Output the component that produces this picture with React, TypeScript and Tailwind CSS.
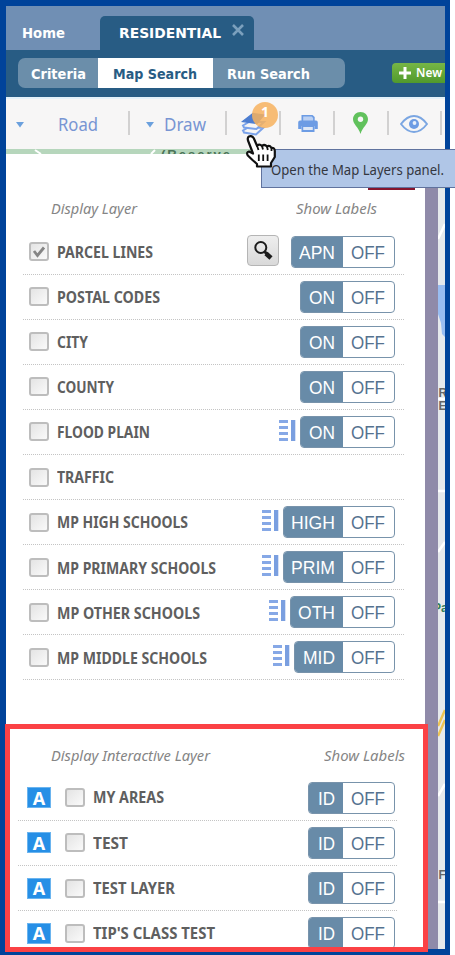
import { useLayoutEffect, useRef, useState } from "react";
import type { ReactNode } from "react";

const PT = "font-['Noto_Sans','Open_Sans',sans-serif]";

// Condenses or widens a line of text so that it fills the given width.
function Fit({ w, className = "", children }: { w: number; className?: string; children: ReactNode }) {
  const ref = useRef<HTMLSpanElement>(null);
  const [scale, setScale] = useState(1);
  useLayoutEffect(() => {
    const el = ref.current;
    if (el) setScale(w / parseFloat(getComputedStyle(el).width));
  }, [w]);
  return (
    <span className={`block shrink-0 whitespace-nowrap ${className}`} style={{ width: w }}>
      <span ref={ref} className="inline-block origin-left" style={{ transform: `scaleX(${scale})` }}>
        {children}
      </span>
    </span>
  );
}

function Checkbox({ checked = false }: { checked?: boolean }) {
  return (
    <span className="flex h-[19px] w-[20px] shrink-0 items-center justify-center rounded-[3px] border-2 border-[#bdbdbd] bg-linear-to-br from-[#e4e4e4] to-[#fafafa]">
      {checked && (
        <svg viewBox="0 0 14 14" className="size-[14px]" fill="none" stroke="#858585" strokeWidth="2.8">
          <path d="M2 6 L5.5 10.5 L12 2.5" />
        </svg>
      )}
    </span>
  );
}

function Toggle({ on, w, textW }: { on: string; w: number; textW: number }) {
  return (
    <span
      className="flex h-[32px] shrink-0 overflow-hidden rounded-[4px] border border-[#7893ab] bg-white font-['Liberation_Sans',sans-serif] text-[18.5px] leading-[31px]"
      style={{ width: w }}
    >
      <span className="flex flex-1 justify-end bg-[#688ba8] pr-[8px] text-white">
        <Fit w={textW}>{on}</Fit>
      </span>
      <span className="w-[51px] pl-[8px] text-[#55728f]">
        <Fit w={34}>OFF</Fit>
      </span>
    </span>
  );
}

function LegendIcon() {
  return (
    <svg viewBox="0 0 17 21" className="mr-[4px] mb-[3px] h-[21px] w-[17px] shrink-0" fill="#86a8e6">
      <path d="M0 0h9v3H0zM0 6h9v3H0zM0 12h9v3H0zM0 18h9v3H0z" />
      <path d="M12 0h4.3v21H12z" fill="#7a9fe0" />
    </svg>
  );
}

type Layer = { name: string; w: number; on?: string; tw?: number; onW?: number; legend?: boolean; search?: boolean; checked?: boolean };

const layers: Layer[] = [
  { name: "PARCEL LINES", w: 96, on: "APN", tw: 104, onW: 36, search: true, checked: true },
  { name: "POSTAL CODES", w: 103, on: "ON", tw: 95, onW: 26 },
  { name: "CITY", w: 31, on: "ON", tw: 95, onW: 26 },
  { name: "COUNTY", w: 57, on: "ON", tw: 95, onW: 26 },
  { name: "FLOOD PLAIN", w: 93, on: "ON", tw: 95, onW: 26, legend: true },
  { name: "TRAFFIC", w: 57 },
  { name: "MP HIGH SCHOOLS", w: 131, on: "HIGH", tw: 112, onW: 44, legend: true },
  { name: "MP PRIMARY SCHOOLS", w: 159, on: "PRIM", tw: 112, onW: 44, legend: true },
  { name: "MP OTHER SCHOOLS", w: 143, on: "OTH", tw: 105, onW: 37, legend: true },
  { name: "MP MIDDLE SCHOOLS", w: 150, on: "MID", tw: 101, onW: 32, legend: true },
];

const areas = [
  { name: "MY AREAS", w: 71 },
  { name: "TEST", w: 35 },
  { name: "TEST LAYER", w: 82 },
  { name: "TIP'S CLASS TEST", w: 122 },
];

function LayerRow({ l }: { l: Layer }) {
  return (
    <div className="ml-[17px] flex h-[45.1px] w-[381px] items-center border-b border-dotted border-[#c4c4c4] pr-[9px] pl-[6px]">
      <Checkbox checked={l.checked} />
      <Fit w={l.w} className={`mt-[2px] ml-[8px] ${PT} text-[15.5px] font-bold text-[#5f5f5f]`}>
        {l.name}
      </Fit>
      <span className="flex-1" />
      {l.search && (
        <span className="mr-[12px] mb-[3px] flex h-[31px] w-[32px] items-center justify-center rounded-[4px] border border-[#b5b5b5] bg-linear-to-b from-[#eeeeee] to-[#d9d9d9]">
          <svg viewBox="0 0 20 21" className="h-[21px] w-[20px]" fill="none" stroke="#1c1c1c">
            <circle cx="7.8" cy="7.5" r="5.5" strokeWidth="2" />
            <path d="M11.5 11.5 L14 14" strokeWidth="3" />
            <path d="M13 13.5 L18 18" strokeWidth="4.6" />
          </svg>
        </span>
      )}
      {l.legend && <LegendIcon />}
      {l.on && <Toggle on={l.on} w={l.tw ?? 95} textW={l.onW ?? 26} />}
    </div>
  );
}

function Divider() {
  return <span className="h-[24px] w-[2px] shrink-0 bg-[#d2d1d1]" />;
}

function Caret() {
  return (
    <svg viewBox="0 0 8 6" className="mt-[3px] h-[6px] w-[8px] shrink-0">
      <path d="M0 0h8L4 5.5z" fill="#6ba0dd" />
    </svg>
  );
}

function LayersIcon() {
  return (
    <svg viewBox="0 0 26 24" className="h-[24px] w-[26px]" fill="none" stroke="#7ba3ea" strokeWidth="2">
      <path d="M2 18.5 L8 15 L22 16 L15 22.5 L3 20.5z" fill="#f7f6f6" />
      <path d="M2 13.5 L8 10 L23 10 L15.5 17 L3 15.5z" fill="#f7f6f6" />
      <path d="M1.5 9.5 L12 1.5 L23 3 L16 11.5z" fill="#4d7dd0" stroke="#4d7dd0" strokeWidth="1.2" />
    </svg>
  );
}

function PrintIcon() {
  return (
    <svg viewBox="0 0 20 17" className="h-[17px] w-[20px]" fill="#6d9ce4">
      <path d="M3.5 0h11l2.2 2V6H3.5z" />
      <path d="M5.2 1.6h8.4l1.5 1.4V6H5.2z" fill="#bcd1f3" />
      <path d="M2 5.5h16q1.8 0 1.8 2V14h-3.3v-3h-13v3H.2V7.500q0-2 1.800-2z" />
      <path d="M3.500 11h13v6h-13z" />
      <path d="M5.200 12h9.600v3H5.200z" fill="#dfe8f6" />
    </svg>
  );
}

function PinIcon() {
  return (
    <svg viewBox="0 0 15 22" className="h-[22px] w-[15px]">
      <path d="M7.5 0C3.2 0 0 3.2 0 7.3C0 12.5 5.5 15 7.5 22C9.5 15 15 12.5 15 7.3C15 3.2 11.8 0 7.5 0z" fill="#61c15c" />
      <circle cx="7.5" cy="7.2" r="2.7" fill="#f7f6f6" />
    </svg>
  );
}

function EyeIcon() {
  return (
    <svg viewBox="0 0 28 18" className="h-[18px] w-[28px]" fill="none" stroke="#7ba6e2">
      <path d="M1 9 Q7 1 14 1 Q21 1 27 9 Q21 17 14 17 Q7 17 1 9z" strokeWidth="1.9" />
      <circle cx="14" cy="9" r="5" fill="#6d9ce4" stroke="none" />
      <circle cx="14.5" cy="8" r="1.9" fill="#e6effb" stroke="none" />
    </svg>
  );
}

function HandCursor() {
  return (
    <svg viewBox="0 0 30 33" className="absolute top-[135px] left-[246px] z-30 h-[33px] w-[30px]">
      <path
        d="M3 1.500Q6 .2 7.800 3.200L11 10.800Q13.500 8.500 16 11Q18.500 8.800 21 11.500Q23.500 10 25.500 12.800Q28.800 12.500 28.800 16V22L25 28V31.500H11V29L6.500 25L1.800 20.500Q0 17.200 3 16.500L7 18.500L2 5.500Q1.200 2.500 3 1.500z"
        fill="#fff"
        stroke="#111"
        strokeWidth="2.2"
        strokeLinejoin="round"
      />
      <path d="M11 10.800L12.500 15M16 11L17 14.500M21 11.500L21.800 15M25.500 12.800V16M12.800 19.500V26M17.200 19.500V26M21.600 19.500V26" fill="none" stroke="#111" strokeWidth="1.800" />
    </svg>
  );
}

function MapSliver() {
  return (
    <svg viewBox="0 0 7 795" className="h-[795px] w-[7px] shrink-0 bg-[#e6e9ec]">
      <path d="M0 0h7v35H0z" fill="#dbeade" />
      <path d="M0 85L7 70M0 245H7M0 337H7M0 398L7 388M0 642L7 630M0 748H7" stroke="#fff" strokeWidth="2.5" fill="none" />
      <path d="M0 131h7v52l-3-3-1-11-3-9z" fill="#99bdf1" />
      <path d="M0 572L7 556M0 582L7 566" stroke="#edc454" strokeWidth="2.5" />
      <g fontFamily="Liberation Sans, sans-serif" fontSize="12" fontWeight="700" fill="#666">
        <text x="0.5" y="243">R</text>
        <text x="0.5" y="256">E</text>
        <text x="0.5" y="725">F</text>
      </g>
      <text x="-5" y="458" fontFamily="Liberation Sans, sans-serif" fontSize="12" fontWeight="700" fill="#328058">Pa</text>
    </svg>
  );
}

export default function App() {
  return (
    <div className="relative h-[955px] w-[455px] overflow-hidden bg-white">
      <div className="flex h-[955px] w-[450px] flex-col overflow-hidden border-t-[6px] border-r-[5px] border-b-[6px] border-l-[6px] border-[#00439a] bg-white">
        {/* Window tabs */}
        <nav className="flex h-[44px] shrink-0 items-end bg-[#708fb4] font-['DejaVu_Sans',sans-serif] text-[14px] font-bold text-white">
          <span className="flex h-[34px] w-[94px] items-center pl-[16px]">
            <Fit w={43}>Home</Fit>
          </span>
          <span className="flex h-[34px] w-[154px] rounded-t-[5px] bg-[#285c84] pl-[19px] leading-[34px]">
            <Fit w={102}>RESIDENTIAL</Fit>
            <svg viewBox="0 0 12 12" className="mt-[8px] ml-[11px] size-[12px]" stroke="#7ba0bd" strokeWidth="2.6">
              <path d="M1 1 L11 11 M11 1 L1 11" />
            </svg>
          </span>
        </nav>

        {/* Search tabs */}
        <div className="flex h-[47px] shrink-0 items-start bg-[#285c84] pt-[8px] pl-[12px] font-['DejaVu_Sans',sans-serif] text-[14px] font-bold text-white">
          <div className="flex h-[30px] w-[327px] overflow-hidden rounded-[7px] bg-[#6b8eaa] leading-[32px]">
            <span className="w-[80px] pl-[13px]">
              <Fit w={55}>Criteria</Fit>
            </span>
            <span className="w-[115px] bg-white pl-[15px] text-[#285c84]">
              <Fit w={84}>Map Search</Fit>
            </span>
            <span className="pl-[14px]">
              <Fit w={83}>Run Search</Fit>
            </span>
          </div>
          <div className="mt-[5px] ml-[47px] flex h-[20px] w-[53px] items-center overflow-hidden rounded-l-[4px] bg-linear-to-b from-[#77b646] to-[#509a2c] pl-[7px]">
            <svg viewBox="0 0 12 12" className="mr-[5px] size-[12px] shrink-0" stroke="#fff" strokeWidth="3">
              <path d="M6 0v12M0 6h12" />
            </svg>
            <Fit w={26} className={`${PT} text-[13px] font-semibold`}>
              New
            </Fit>
          </div>
        </div>

        {/* Map tools */}
        <div className={`flex h-[52px] shrink-0 items-center border-t-2 border-[#e3f1fa] bg-[#f7f6f6] pb-[2px] pl-[10px] ${PT} text-[18px] text-[#7895d3]`}>
          <Caret />
          <Fit w={40} className="mt-[2px] ml-[34px]">Road</Fit>
          <span className="w-[30px]" />
          <Divider />
          <span className="w-[16px]" />
          <Caret />
          <Fit w={42} className="mt-[2px] ml-[10px]">Draw</Fit>
          <span className="w-[19px]" />
          <Divider />
          <span className="relative mt-[2px] ml-[14px]">
            <LayersIcon />
            <span className="absolute -top-[10px] left-[11px] flex size-[26px] items-center justify-center rounded-full bg-[#f7b25e]/85 text-[14px] leading-none font-bold text-white">
              <span className="mb-[6px]">1</span>
            </span>
          </span>
          <span className="w-[12px]" />
          <Divider />
          <span className="w-[17px]" />
          <PrintIcon />
          <span className="w-[15px]" />
          <Divider />
          <span className="w-[18px]" />
          <PinIcon />
          <span className="w-[19px]" />
          <Divider />
          <span className="w-[11px]" />
          <span className="mt-[2px]">
            <EyeIcon />
          </span>
          <span className="w-[12px]" />
          <Divider />
        </div>

        {/* Visible edge of the map */}
        <div className="relative h-[5px] shrink-0 overflow-hidden bg-[#b6d6bc]">
          <svg viewBox="0 0 439 5" className="h-[5px] w-[439px]">
            <path d="M29 1L35 5M149 1L145 5" stroke="#fff" strokeWidth="2" />
            <text x="155" y="10" fontFamily="Liberation Sans, sans-serif" fontSize="13" fontWeight="700" fill="#4a7457" textLength="69">
              (Reserve
            </text>
          </svg>
        </div>

        <div className="flex h-[795px] shrink-0">
          {/* Layers panel */}
          <main className="h-[795px] w-[419px] shrink-0 overflow-hidden bg-white">
            <header className={`flex h-[75.5px] items-end justify-between pr-[48px] pb-[10.5px] pl-[45px] ${PT} text-[15px] text-[#858585] italic`}>
              <Fit w={86}>Display Layer</Fit>
              <Fit w={81}>Show Labels</Fit>
            </header>
            {layers.map((l) => (
              <LayerRow key={l.name} l={l} />
            ))}
            <header className={`flex h-[95px] items-end justify-between pr-[20px] pb-[9px] pl-[45px] ${PT} text-[15px] text-[#858585] italic`}>
              <Fit w={159}>Display Interactive Layer</Fit>
              <Fit w={81}>Show Labels</Fit>
            </header>
            {areas.map((a) => (
              <div key={a.name} className="ml-[12px] flex h-[45.3px] w-[379px] items-center border-b border-dotted border-[#c4c4c4] pr-[2px] pl-[9px]">
                <span className={`flex h-[21px] w-[24px] items-center justify-center border border-[#6ab4ef] bg-[#268fe6] ${PT} text-[18px] leading-none font-bold text-white`}>
                  A
                </span>
                <span className="w-[14px]" />
                <Checkbox />
                <Fit w={a.w} className={`mt-[1px] ml-[8px] ${PT} text-[15.5px] font-bold text-[#5f5f5f]`}>
                  {a.name}
                </Fit>
                <span className="flex-1" />
                <Toggle on="ID" w={87} textW={17} />
              </div>
            ))}
          </main>
          <span className="w-[13px] shrink-0 bg-[#8f8aa9]" />
          <MapSliver />
        </div>
      </div>

      {/* Highlight around the interactive layers */}
      <div className="absolute top-[724px] left-[5px] h-[228px] w-[423px] border-[5.5px] border-[#fb4145]" />

      <div className="absolute top-[188px] left-[368px] h-[2px] w-[47px] bg-[#86152d]" />
      <div className={`absolute top-[149px] left-[261px] z-20 flex h-[39px] w-[200px] items-center border border-[#60739e] bg-[#b0c6e7] pt-[2px] pl-[9px] ${PT} text-[15px] text-[#34373f]`}>
        <Fit w={173}>Open the Map Layers panel.</Fit>
      </div>
      <HandCursor />
    </div>
  );
}
